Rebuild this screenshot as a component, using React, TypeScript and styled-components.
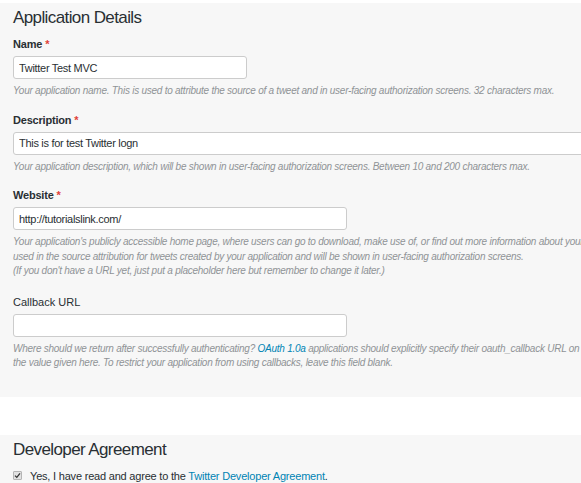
import React from 'react'
import styled, { createGlobalStyle } from 'styled-components'

const GlobalStyle = createGlobalStyle`
  html, body {
    margin: 0;
    padding: 0;
    background: #ffffff;
    overflow: hidden;
  }
  body {
    font-family: "Liberation Sans", Arial, sans-serif;
    color: #292f33;
  }
`

const Page = styled.div`
  width: 760px;
  padding-top: 3px;
`

const Panel = styled.section<{ $bottom: number }>`
  background: #f7f7f7;
  padding: 4px 13px ${p => p.$bottom}px;
`

const Heading = styled.h2`
  margin: 0;
  font-size: 17px;
  line-height: 22px;
  font-weight: normal;
  color: #292f33;
  letter-spacing: -0.6px;
`

const Form = styled.div`
  display: flex;
  flex-direction: column;
  gap: 13px;
  margin-top: 7px;
`

const Field = styled.div`
  display: flex;
  flex-direction: column;
  align-items: flex-start;
`

const Label = styled.label<{ $light?: boolean }>`
  font-size: 11px;
  line-height: 16px;
  font-weight: ${p => (p.$light ? 'normal' : 'bold')};
  color: #292f33;
  margin-bottom: 4px;
  letter-spacing: ${p => (p.$light ? '0' : '-0.2px')};
`

const Required = styled.span`
  color: #e0413a;
  margin-left: 3px;
`

const Input = styled.input<{ $width: number }>`
  box-sizing: border-box;
  width: ${p => p.$width}px;
  height: 23px;
  padding: 0 5px;
  border: 1px solid #cccccc;
  border-radius: 3px;
  background: #ffffff;
  font-family: "Liberation Sans", Arial, sans-serif;
  font-size: 11px;
  color: #292f33;
  letter-spacing: -0.3px;
  outline: none;
`

const Help = styled.p<{ $after?: number }>`
  margin: 5px 0 ${p => p.$after ?? 0}px;
  font-size: 10px;
  line-height: 14.5px;
  font-style: italic;
  color: #8f9396;
  white-space: nowrap;
  letter-spacing: -0.25px;
`

const Link = styled.a`
  color: #0084b4;
  text-decoration: none;
`

const Gap = styled.div`
  height: 38px;
`

const AgreeRow = styled.div`
  display: flex;
  align-items: center;
  gap: 8px;
  margin-top: 7px;
  font-size: 11px;
  line-height: 16px;
  color: #292f33;
  letter-spacing: -0.2px;
`

const Check = styled.span`
  box-sizing: border-box;
  width: 9px;
  height: 9px;
  border: 1px solid #b5b5b5;
  border-radius: 1px;
  background: #e2e2e2;
  display: inline-flex;
  align-items: center;
  justify-content: center;
`

const App: React.FC = () => {
  return (
    <Page>
      <GlobalStyle />
      <Panel $bottom={26}>
        <Heading>Application Details</Heading>
        <Form>
          <Field>
            <Label>
              Name<Required>*</Required>
            </Label>
            <Input $width={234} defaultValue="Twitter Test MVC" />
            <Help>
              Your application name. This is used to attribute the source of a tweet and in
              user-facing authorization screens. 32 characters max.
            </Help>
          </Field>
          <Field>
            <Label>
              Description<Required>*</Required>
            </Label>
            <Input $width={720} defaultValue="This is for test Twitter logn" />
            <Help>
              Your application description, which will be shown in user-facing authorization
              screens. Between 10 and 200 characters max.
            </Help>
          </Field>
          <Field>
            <Label>
              Website<Required>*</Required>
            </Label>
            <Input $width={334} defaultValue="http://tutorialslink.com/" />
            <Help $after={2}>
              Your application's publicly accessible home page, where users can go to download,
              make use of, or find out more information about your application. This
              fully-qualified URL is
              <br />
              used in the source attribution for tweets created by your application and will be
              shown in user-facing authorization screens.
              <br />
              (If you don't have a URL yet, just put a placeholder here but remember to change it
              later.)
            </Help>
          </Field>
          <Field>
            <Label $light>Callback URL</Label>
            <Input $width={334} defaultValue="" />
            <Help>
              Where should we return after successfully authenticating?{' '}
              <Link href="#">OAuth 1.0a</Link> applications should explicitly specify their
              oauth_callback URL on the request token step, regardless of
              <br />
              the value given here. To restrict your application from using callbacks, leave this
              field blank.
            </Help>
          </Field>
        </Form>
      </Panel>
      <Gap />
      <Panel $bottom={20}>
        <Heading>Developer Agreement</Heading>
        <AgreeRow>
          <Check>
            <svg width="7" height="7" viewBox="0 0 7 7">
              <path d="M1 3.6 L2.8 5.4 L6 1.4" fill="none" stroke="#333" strokeWidth="1.3" />
            </svg>
          </Check>
          <span>
            Yes, I have read and agree to the <Link href="#">Twitter Developer Agreement</Link>.
          </span>
        </AgreeRow>
      </Panel>
    </Page>
  )
}

export default App
